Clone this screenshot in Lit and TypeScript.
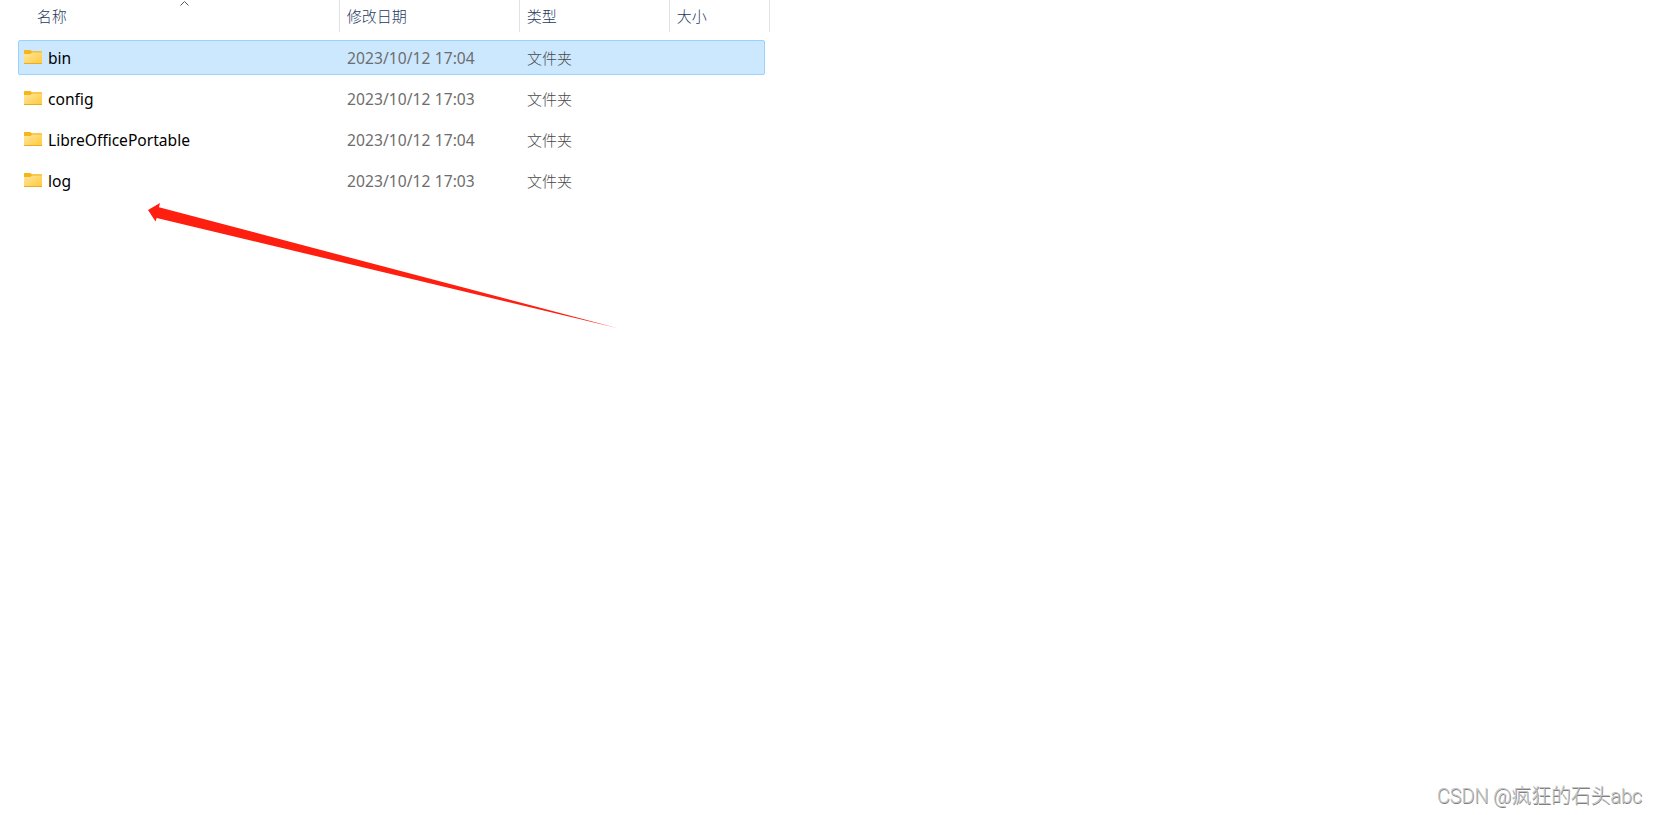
import { LitElement, html, css } from "lit";
import { customElement, property } from "lit/decorators.js";

@customElement("folder-icon")
class FolderIcon extends LitElement {
  static styles = css`
    :host { display: block; width: 18px; height: 14px; }
    svg { display: block; }
  `;
  render() {
    return html`<svg width="18" height="14" viewBox="0 0 18 14">
      <defs>
        <linearGradient id="g" x1="0" y1="0" x2="1" y2="1">
          <stop offset="0" stop-color="#ffe7a2"></stop>
          <stop offset="1" stop-color="#ffc937"></stop>
        </linearGradient>
      </defs>
      <path d="M0 0.6Q0 0 .6 0H6.2L8 1.3H17.4Q18 1.3 18 1.9V5H0Z" fill="#f5b51b"></path>
      <path d="M0 4H6.6L8 2.4H18V13.4Q18 14 17.4 14H.6Q0 14 0 13.4Z" fill="url(#g)"></path>
      <path d="M0 13H18V13.4Q18 14 17.4 14H.6Q0 14 0 13.4Z" fill="#e8ab2c"></path>
    </svg>`;
  }
}

@customElement("app-root")
class AppRoot extends LitElement {
  @property({ attribute: false }) rows = [
    { name: "bin", date: "2023/10/12 17:04", selected: true },
    { name: "config", date: "2023/10/12 17:03" },
    { name: "LibreOfficePortable", date: "2023/10/12 17:04" },
    { name: "log", date: "2023/10/12 17:03" },
  ];

  static styles = css`
    :host {
      display: flex;
      flex-direction: column;
      position: relative;
      width: 100%;
      height: 815px;
      overflow: hidden;
      background: #fff;
      font-family: "Noto Sans", "Noto Sans CJK SC", sans-serif;
      font-size: 15.6px;
      color: #000;
    }
    .header {
      display: grid;
      grid-template-columns: 322px 180px 150px 100px;
      padding-left: 18px;
      height: 32px;
      font-family: "Noto Sans CJK SC", sans-serif;
      font-weight: 300;
      font-size: 15px;
      line-height: 31px;
      color: #1f3a60;
    }
    .cell {
      box-sizing: border-box;
      border-right: 1px solid #e2e2e2;
      padding-left: 6.7px;
      position: relative;
    }
    .cell.first { padding-left: 18.7px; }
    .sort { position: absolute; left: 161px; top: 0; }
    .list {
      display: flex;
      flex-direction: column;
      gap: 6px;
      padding: 8px 0 0 18px;
      width: 747px;
    }
    .row {
      box-sizing: border-box;
      display: grid;
      grid-template-columns: 322px 180px 1fr;
      align-items: center;
      height: 35px;
      border: 1px solid transparent;
      border-radius: 2px;
      line-height: 33px;
    }
    .row.selected { background: #cce8ff; border-color: #99d1ff; }
    .name { display: flex; align-items: center; gap: 6px; padding-left: 5px; }
    .name folder-icon { margin-top: -1px; }
    .name span, .date { height: 33px; line-height: 35px; }
    .date, .type { color: #6d6d6d; padding-left: 6px; }
    .date { letter-spacing: 0.06px; }
    .type {
      font-family: "Noto Sans CJK SC", sans-serif;
      font-weight: 300;
      font-size: 15px;
      color: #484848;
    }
    .arrow { position: absolute; left: 0; top: 0; }
    .mark {
      position: absolute;
      right: 15px;
      bottom: 4px;
      font: 300 20px/30px Roboto, "Noto Sans CJK SC", sans-serif;
      letter-spacing: -0.17px;
      color: #c4c4c4;
      text-shadow: 0.6px 0.6px 0 #808080;
      white-space: nowrap;
    }
  `;

  render() {
    return html`
      <div class="header">
        <div class="cell first">名称
          <svg class="sort" width="12" height="8" viewBox="0 0 12 8">
            <path d="M1.5 5.5L5.5 1.5L9.5 5.5" fill="none" stroke="#5a5a5a"></path>
          </svg>
        </div>
        <div class="cell">修改日期</div>
        <div class="cell">类型</div>
        <div class="cell">大小</div>
      </div>
      <div class="list">
        ${this.rows.map((r) => html`
          <div class="row ${r.selected ? "selected" : ""}">
            <div class="name"><folder-icon></folder-icon><span>${r.name}</span></div>
            <div class="date">${r.date}</div>
            <div class="type">文件夹</div>
          </div>`)}
      </div>
      <svg class="arrow" width="640" height="340" viewBox="0 0 640 340">
        <path d="M148 210L160 203L159 207.3L617 328L156.7 218L155.5 221.5Z" fill="#ff1f10"></path>
      </svg>
      <div class="mark">CSDN @疯狂的石头abc</div>
    `;
  }
}
